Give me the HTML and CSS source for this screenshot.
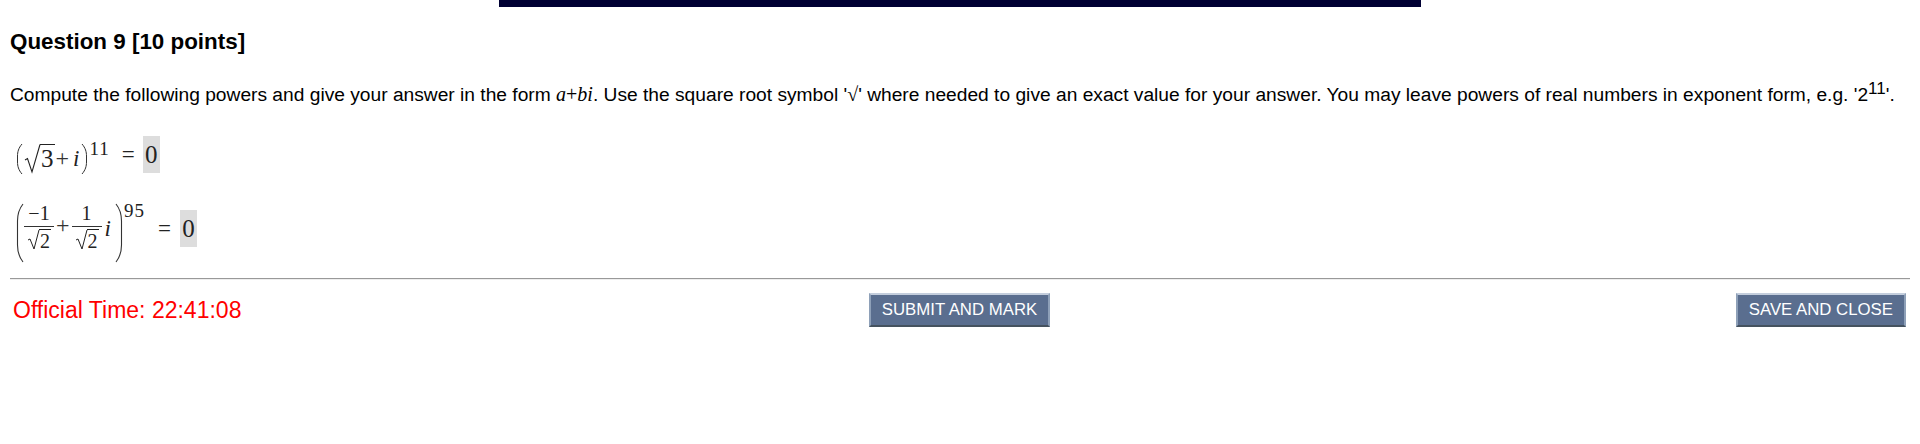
FILE: index.html
```html
<!DOCTYPE html>
<html lang="en">
<head>
<meta charset="utf-8">
<title>Question 9</title>
<link rel="stylesheet" href="styles.css">
</head>
<body>
<div class="topbar"></div>
<main class="content">
  <h2 class="title">Question 9 [10 points]</h2>
  <p class="prompt">Compute the following powers and give your answer in the form <span class="mathtext"><i>a</i>+<i>b</i><i>i</i></span>. Use the square root symbol '<span class="mathtext">√</span>' where needed to give an exact value for your answer. You may leave powers of real numbers in exponent form, e.g. '2<sup class="exp">11</sup>'.</p>

  <div class="eq eq-one">
    <svg class="paren" width="7" height="32" viewBox="0 0 7 32"><path d="M6 1C2.500 5 1.500 9 1.500 13L1.500 19C1.500 23 2.500 27 6 31" fill="none" stroke="#333" stroke-width="1"/></svg>
    <span class="root root-big">
      <svg class="radical" width="17" height="30" viewBox="0 0 17 30"><path d="M1 16L3.500 14.500L8 28L16 .5" fill="none" stroke="#222" stroke-width="1.100"/></svg>
      <span class="radicand">3</span>
    </span>
    <span class="op">+</span><i class="var">i</i>
    <svg class="paren" width="7" height="32" viewBox="0 0 7 32"><path d="M1 1C4.500 5 5.500 9 5.500 13L5.500 19C5.500 23 4.500 27 1 31" fill="none" stroke="#333" stroke-width="1"/></svg>
    <span class="power">11</span>
    <span class="equals">=</span>
    <span class="answer">0</span>
  </div>

  <div class="eq eq-two">
    <svg class="bigparen" width="8" height="60" viewBox="0 0 8 60"><path d="M7 1C3 6 1.500 12 1.500 18L1.500 42C1.500 48 3 54 7 59" fill="none" stroke="#333" stroke-width="1.100"/></svg>
    <span class="frac">
      <span class="num">−1</span>
      <span class="den"><span class="root"><svg class="radical" width="13" height="21" viewBox="0 0 13 21"><path d="M1 11L3 10L7 20L12 1" fill="none" stroke="#222" stroke-width="1"/></svg><span class="radicand-small">2</span></span></span>
    </span>
    <span class="op op-two">+</span>
    <span class="frac">
      <span class="num">1</span>
      <span class="den"><span class="root"><svg class="radical" width="13" height="21" viewBox="0 0 13 21"><path d="M1 11L3 10L7 20L12 1" fill="none" stroke="#222" stroke-width="1"/></svg><span class="radicand-small">2</span></span></span>
    </span>
    <i class="var var-two">i</i>
    <svg class="bigparen" width="8" height="60" viewBox="0 0 8 60"><path d="M1 1C5 6 6.500 12 6.500 18L6.500 42C6.500 48 5 54 1 59" fill="none" stroke="#333" stroke-width="1.100"/></svg>
    <span class="power power-two">95</span>
    <span class="equals">=</span>
    <span class="answer">0</span>
  </div>

  <div class="rule"></div>

  <div class="footer">
    <span class="time">Official Time: 22:41:08</span>
    <button class="btn" type="button">SUBMIT AND MARK</button>
    <button class="btn btn-end" type="button">SAVE AND CLOSE</button>
  </div>
</main>
</body>
</html>
```
FILE: styles.css
```css
* { box-sizing: border-box; }
html, body { margin: 0; padding: 0; }
body {
  background: #fff;
  color: #000;
  font-family: "Liberation Sans", Arial, sans-serif;
  height: 444px;
  overflow: hidden;
}
.topbar {
  width: 922px;
  height: 7px;
  margin: 0 auto;
  background: #000033;
}
.content { padding: 0 10px; }
.title {
  margin: 22px 0 0;
  font-size: 22.400px;
  line-height: 26px;
  font-weight: bold;
}
.prompt {
  margin: 26px 0 0;
  font-size: 19.200px;
  line-height: 26px;
  white-space: nowrap;
}
.mathtext { font-family: "Liberation Serif", "Times New Roman", serif; font-size: 20px; }
.exp { font-size: 17px; line-height: 0; vertical-align: 7px; }
.eq {
  display: flex;
  align-items: center;
  font-family: "Liberation Serif", "Times New Roman", serif;
  color: #222;
  padding-left: 6px;
}
.eq-one { margin-top: 28px; height: 37px; }
.eq-two { margin-top: 37px; height: 37px; }
.paren { flex: none; margin-top: 8px; }
.bigparen { flex: none; margin-top: 9px; }
.root { display: inline-flex; align-items: flex-start; }
.root-big { margin: 8px 0 0 1px; }
.radical { flex: none; }
.radicand {
  border-top: 1px solid #222;
  font-size: 25px;
  line-height: 28px;
  margin-left: -1px;
  padding: 0 1px;
}
.radicand-small {
  border-top: 1px solid #222;
  font-size: 20px;
  line-height: 22px;
  margin-left: -1px;
  padding: 0 1px;
}
.op { font-size: 24px; margin: 8px 1px 0; color: #333; }
.op-two { margin: -6px 2px 0; }
.var { font-size: 23px; margin: 8px 2px 0 3px; }
.var-two { margin: 0 4px 0 3px; }
.power { font-size: 19px; letter-spacing: 1px; align-self: flex-start; margin: 3px 0 0 1px; line-height: 19px; }
.power-two { margin: -9px 0 0 1px; }
.frac {
  display: inline-flex;
  flex-direction: column;
  align-items: center;
  width: 30px;
  flex: none;
  margin-top: 1px;
}
.num {
  font-size: 20px;
  line-height: 22px;
  width: 100%;
  text-align: center;
  border-bottom: 1px solid #333;
  padding-bottom: 2px;
}
.den { display: block; margin-top: 2px; line-height: 22px; }
.equals { font-size: 23px; margin: 0 8px 0 12px; }
.eq-two .equals { margin-left: 13px; margin-right: 9px; }
.answer {
  background: #dddddd;
  width: 17px;
  height: 37px;
  font-size: 25px;
  line-height: 37px;
  text-align: center;
}
.rule {
  margin-top: 31px;
  height: 2px;
  background: #999;
  border-bottom: 1px solid #eee;
}
.footer {
  display: grid;
  grid-template-columns: 1fr auto 1fr;
  align-items: center;
  margin-top: 13px;
  padding: 0 4px 0 3px;
}
.time {
  color: #ff0000;
  font-size: 23px;
  line-height: 34px;
}
.btn {
  height: 34px;
  padding: 0 11px;
  background: #5a6e8f;
  color: #fff;
  font-family: "Liberation Sans", Arial, sans-serif;
  font-size: 16.800px;
  border-style: solid;
  border-width: 2px;
  border-color: #c4cedd #8ea0b8 #45525f #8ea0b8;
}
.btn-end { justify-self: end; }
```
